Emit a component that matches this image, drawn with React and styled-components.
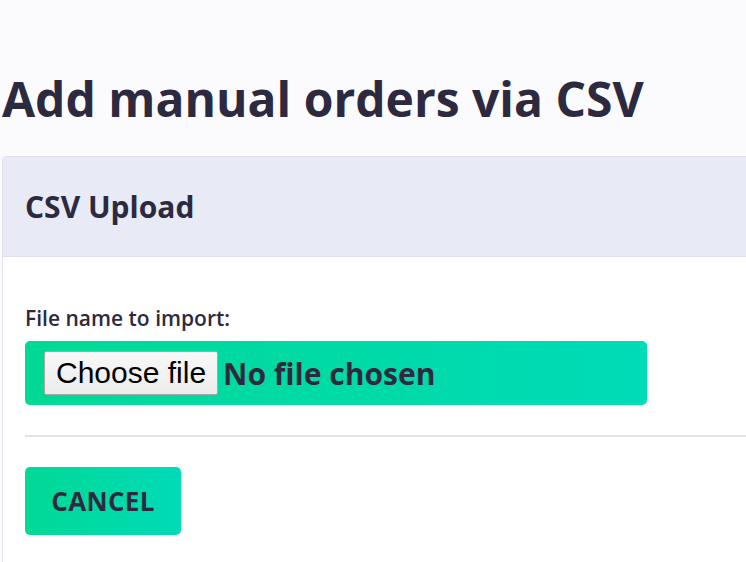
import React, { useState } from "react";
import styled, { createGlobalStyle } from "styled-components";

const Global = createGlobalStyle`
  html, body { margin: 0; padding: 0; }
  body {
    background: #fbfbfe;
    font-family: "Open Sans", "Noto Sans", sans-serif;
    color: #2d2a3f;
    overflow: hidden;
    width: 746px;
    height: 562px;
  }
`;

const Page = styled.div`
  padding: 64px 0 0 2px;
`;

const Title = styled.h1`
  margin: 0 0 22px 0;
  font-size: 48px;
  font-weight: 700;
  line-height: 70px;
  color: #2d2a3f;
  white-space: nowrap;
`;

const Card = styled.section`
  width: 900px;
  min-height: 600px;
  background: #ffffff;
  border: 1px solid #dfe0ec;
  border-radius: 4px;
`;

const CardHeader = styled.header`
  height: 99px;
  display: flex;
  align-items: center;
  padding-left: 22px;
  background: #e8eaf6;
  border-bottom: 1px solid #dfe0ec;
  border-radius: 4px 4px 0 0;
`;

const CardTitle = styled.h2`
  margin: 0;
  font-size: 30px;
  font-weight: 700;
  color: #2d2a3f;
`;

const CardBody = styled.div`
  padding: 48px 0 0 22px;
`;

const Label = styled.label`
  display: block;
  font-size: 21px;
  font-weight: 600;
  line-height: 27px;
  color: #2d2a3f;
  margin-bottom: 9px;
`;

const FileField = styled.label`
  display: flex;
  align-items: center;
  box-sizing: border-box;
  width: 622px;
  height: 64px;
  padding: 0 0 0 19px;
  border-radius: 5px;
  background: linear-gradient(to right, #00d995, #00dbb8);
  cursor: pointer;
`;

const HiddenInput = styled.input`
  display: none;
`;

const ChooseButton = styled.span`
  display: inline-flex;
  align-items: center;
  box-sizing: border-box;
  height: 44px;
  padding: 0 11px;
  margin-right: 5px;
  border: 1px solid #a8a8a8;
  border-radius: 2px;
  background: linear-gradient(#f8f8f8, #ececec);
  font-family: "Liberation Sans", Arial, sans-serif;
  font-weight: 400;
  font-size: 30px;
  color: #000;
`;

const FileStatus = styled.span`
  font-family: "Open Sans", sans-serif;
  font-size: 30px;
  font-weight: 700;
  color: #2d2a3f;
  white-space: nowrap;
`;

const Divider = styled.hr`
  margin: 30px 0 30px 0;
  border: none;
  border-top: 2px solid #e1e2ee;
`;

const CancelButton = styled.button`
  width: 156px;
  height: 68px;
  border: none;
  border-radius: 5px;
  background: linear-gradient(to right, #00d995, #00dbb8);
  font-family: "Open Sans", sans-serif;
  font-size: 26px;
  font-weight: 700;
  color: #2d2a3f;
  letter-spacing: 0.3px;
  cursor: pointer;
`;

export default function App() {
  const [fileName, setFileName] = useState("");
  return (
    <>
      <Global />
      <Page>
        <Title>Add manual orders via CSV</Title>
        <Card>
          <CardHeader>
            <CardTitle>CSV Upload</CardTitle>
          </CardHeader>
          <CardBody>
            <Label htmlFor="csv">File name to import:</Label>
            <FileField>
              <HiddenInput
                id="csv"
                type="file"
                accept=".csv"
                onChange={(e) => setFileName(e.target.files?.[0]?.name || "")}
              />
              <ChooseButton>Choose file</ChooseButton>
              <FileStatus>{fileName || "No file chosen"}</FileStatus>
            </FileField>
            <Divider />
            <CancelButton type="button">CANCEL</CancelButton>
          </CardBody>
        </Card>
      </Page>
    </>
  );
}
